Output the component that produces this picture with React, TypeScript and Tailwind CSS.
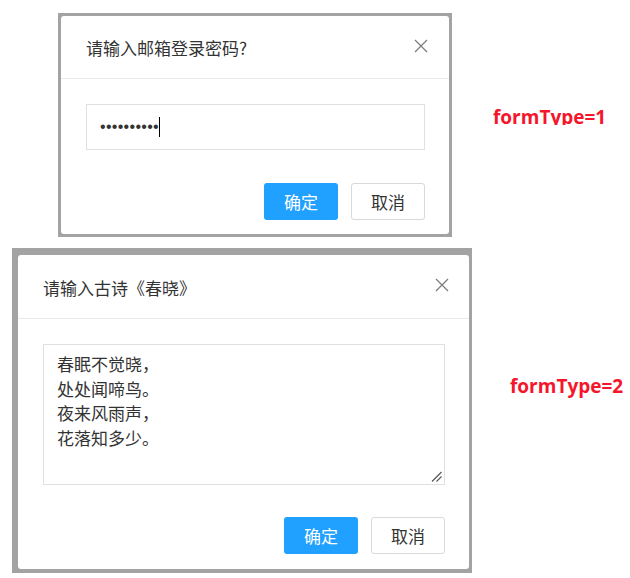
import React from "react";

const CJK = '"Noto Sans CJK SC", "Noto Sans", sans-serif';

function CloseX() {
  return (
    <svg width="14" height="14" viewBox="0 0 14 14" className="block">
      <path d="M1 1 L13 13 M13 1 L1 13" stroke="#7a7a7a" strokeWidth="1.2" fill="none" />
    </svg>
  );
}

function Buttons() {
  return (
    <div className="flex justify-end gap-[13px]">
      <div className="w-[74px] h-[37px] rounded-[3px] bg-[#20a0ff] text-white text-[17px] leading-[37px] text-center">
        确定
      </div>
      <div className="w-[74px] h-[37px] rounded-[3px] bg-white border border-[#d9d9d9] text-[#333] text-[17px] leading-[35px] text-center">
        取消
      </div>
    </div>
  );
}

function Label({ text }: { text: string }) {
  return (
    <div
      className="text-[19px] leading-[19px] font-bold text-[#f5162b] whitespace-nowrap"
      style={{ fontFamily: '"Open Sans", sans-serif' }}
    >
      {text}
    </div>
  );
}

export default function App() {
  return (
    <div className="w-[630px] h-[578px] bg-white pt-[13px] overflow-hidden" style={{ fontFamily: CJK }}>
      {/* Dialog 1 */}
      <div className="flex items-start">
        <div className="ml-[58px] bg-[#a3a3a3] p-[3px]">
          <div className="w-[388px] h-[218px] bg-white rounded-[3px] flex flex-col">
            <div className="h-[62px] pl-[25px] pr-[21px] flex items-center justify-between border-b border-[#e9e9e9] box-content">
              <div className="text-[17px] leading-[24px] text-[#333] pt-[2px]">请输入邮箱登录密码?</div>
              <div className="-mt-[3px]"><CloseX /></div>
            </div>
            <div className="pt-[25px] pl-[25px] pr-[24px]">
              <div className="h-[46px] border border-[#e0e0e0] flex items-center pl-[13px]">
                <span
                  className="text-[16px] leading-[20px] text-[#333] tracking-[0.3px]"
                  style={{ fontFamily: '"Liberation Sans", sans-serif' }}
                >
                  ••••••••••
                </span>
                <span className="w-px h-[20px] bg-black" />
              </div>
            </div>
            <div className="pt-[33px] pr-[24px]">
              <Buttons />
            </div>
          </div>
        </div>
        <div className="ml-[41px] mt-[95px] h-[17px] overflow-hidden">
          <Label text="formType=1" />
        </div>
      </div>

      {/* Dialog 2 */}
      <div className="flex items-start mt-[11px]">
        <div className="ml-[12px] bg-[#a3a3a3] pt-[7px] pl-[6px] pr-[3px] pb-[4px]">
          <div className="w-[451px] h-[314px] bg-white rounded-[3px] flex flex-col">
            <div className="h-[63px] pl-[25px] pr-[20px] flex items-center justify-between border-b border-[#e9e9e9] box-content">
              <div className="text-[17px] leading-[24px] text-[#333] pt-[2px]">请输入古诗《春晓》</div>
              <div className="-mt-[3px]"><CloseX /></div>
            </div>
            <div className="pt-[25px] pl-[25px] pr-[24px]">
              <div className="relative h-[141px] border border-[#e0e0e0] pl-[13px] pt-[7px] text-[17px] leading-[24.7px] text-[#333]">
                <div>春眠不觉晓，</div>
                <div>处处闻啼鸟。</div>
                <div>夜来风雨声，</div>
                <div>花落知多少。</div>
                <svg className="absolute right-[2px] bottom-[2px]" width="11" height="11" viewBox="0 0 11 11">
                  <path d="M1 10.5 L10.5 1 M5.5 10.5 L10.5 5.5" stroke="#555" strokeWidth="1.1" fill="none" />
                </svg>
              </div>
            </div>
            <div className="pt-[32px] pr-[24px]">
              <Buttons />
            </div>
          </div>
        </div>
        <div className="ml-[38px] mt-[129px]">
          <Label text="formType=2" />
        </div>
      </div>
    </div>
  );
}
